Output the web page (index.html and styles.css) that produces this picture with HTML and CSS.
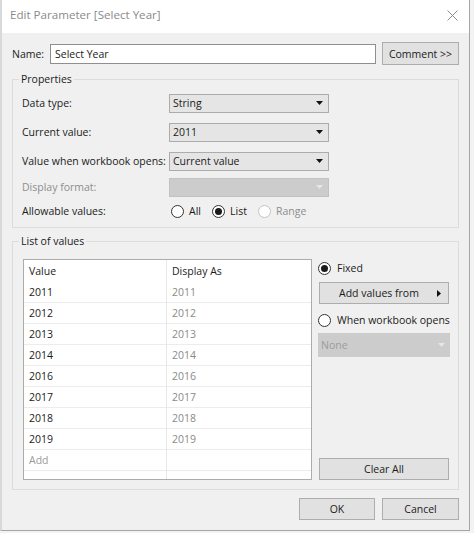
FILE: index.html
```html
<!DOCTYPE html>
<html>
<head>
<meta charset="utf-8">
<title>Edit Parameter</title>
<link rel="stylesheet" href="styles.css">
</head>
<body>
<div class="window">
  <div class="titlebar">
    <span class="title">Edit Parameter [Select Year]</span>
    <svg class="close" width="11" height="11" viewBox="0 0 11 11"><path d="M0.5 0.5L10.5 10.5M10.5 0.5L0.5 10.5" stroke="#8c8c8c" stroke-width="1" fill="none"/></svg>
  </div>
  <div class="content">
    <div class="name-row">
      <span class="name-label">Name:</span>
      <div class="input">Select Year</div>
      <div class="btn comment">Comment &gt;&gt;</div>
    </div>

    <div class="group props">
      <div class="group-title">Properties</div>
      <div class="prow r1">
        <span class="plabel">Data type:</span>
        <div class="combo"><span class="combo-text">String</span><svg class="arrow" width="7" height="4" viewBox="0 0 7 4"><path d="M0 0H7L3.5 4Z" fill="#111"/></svg></div>
      </div>
      <div class="prow r2">
        <span class="plabel">Current value:</span>
        <div class="combo"><span class="combo-text">2011</span><svg class="arrow" width="7" height="4" viewBox="0 0 7 4"><path d="M0 0H7L3.5 4Z" fill="#111"/></svg></div>
      </div>
      <div class="prow r3">
        <span class="plabel">Value when workbook opens:</span>
        <div class="combo"><span class="combo-text">Current value</span><svg class="arrow" width="7" height="4" viewBox="0 0 7 4"><path d="M0 0H7L3.5 4Z" fill="#111"/></svg></div>
      </div>
      <div class="prow r4">
        <span class="plabel disabled">Display format:</span>
        <div class="combo off"><span class="combo-text"></span><svg class="arrow" width="7" height="4" viewBox="0 0 7 4"><path d="M0 0H7L3.5 4Z" fill="#e6e6e6"/></svg></div>
      </div>
      <div class="prow r5">
        <span class="plabel">Allowable values:</span>
        <div class="opts">
          <div class="opt o-all"><span class="radio"></span><span>All</span></div>
          <div class="opt o-list"><span class="radio on"></span><span>List</span></div>
          <div class="opt o-range disabled"><span class="radio off"></span><span>Range</span></div>
        </div>
      </div>
    </div>

    <div class="group values">
      <div class="group-title">List of values</div>
      <div class="values-body">
        <div class="table">
          <div class="trow head"><div class="c1">Value</div><div class="c2">Display As</div></div>
          <div class="trow"><div class="c1">2011</div><div class="c2">2011</div></div>
          <div class="trow"><div class="c1">2012</div><div class="c2">2012</div></div>
          <div class="trow"><div class="c1">2013</div><div class="c2">2013</div></div>
          <div class="trow"><div class="c1">2014</div><div class="c2">2014</div></div>
          <div class="trow"><div class="c1">2016</div><div class="c2">2016</div></div>
          <div class="trow"><div class="c1">2017</div><div class="c2">2017</div></div>
          <div class="trow"><div class="c1">2018</div><div class="c2">2018</div></div>
          <div class="trow"><div class="c1">2019</div><div class="c2">2019</div></div>
          <div class="trow add"><div class="c1">Add</div><div class="c2"></div></div>
          <div class="trow filler"><div class="c1"></div><div class="c2"></div></div>
        </div>
        <div class="side">
          <div class="sopt fixed"><span class="radio on"></span><span>Fixed</span></div>
          <div class="btn addvals"><span class="addvals-text">Add values from</span><svg class="rarrow" width="4" height="7" viewBox="0 0 4 7"><path d="M0 0L4 3.5L0 7Z" fill="#111"/></svg></div>
          <div class="sopt when"><span class="radio"></span><span>When workbook opens</span></div>
          <div class="combo none"><span class="combo-text">None</span><svg class="arrow" width="7" height="4" viewBox="0 0 7 4"><path d="M0 0H7L3.5 4Z" fill="#e6e6e6"/></svg></div>
          <div class="btn clearall">Clear All</div>
        </div>
      </div>
    </div>

    <div class="footer">
      <div class="btn ok">OK</div>
      <div class="btn cancel">Cancel</div>
    </div>
  </div>
</div>
</body>
</html>
```

FILE: styles.css
```css
* { box-sizing: border-box; }

html, body {
  margin: 0;
  padding: 0;
}

body {
  background: #f3f3f3;
  font-family: "Open Sans", "Noto Sans", sans-serif;
  font-size: 10.5px;
  color: #1b1b1b;
  white-space: nowrap;
}

.window {
  width: 470px;
  height: 531px;
  background: #f0f0f0;
  border-left: 2px solid #d9d9d9;
  border-right: 1px solid #a5a5a5;
  border-bottom: 1px solid #a5a5a5;
  overflow: hidden;
}

.titlebar {
  height: 33px;
  background: #ffffff;
  display: flex;
  justify-content: space-between;
  align-items: flex-start;
  padding: 6px 11px 0 8px;
}

.title {
  font-size: 11.6px;
  line-height: 18px;
  color: #8a8a8a;
}

.close {
  margin-top: 4px;
  display: block;
}

.content {
  padding: 9px 10px 0 10px;
}

.name-row {
  display: flex;
  align-items: center;
  height: 23px;
}

.name-label {
  width: 38px;
}

.input {
  width: 326px;
  height: 20px;
  background: #ffffff;
  border: 1px solid #8f8f8f;
  padding-left: 4px;
  line-height: 18px;
  margin-right: 6px;
}

.btn {
  background: #e1e1e1;
  border: 1px solid #adadad;
  display: flex;
  align-items: center;
  justify-content: center;
  height: 22px;
}

.comment {
  width: 77px;
  height: 23px;
}

.group {
  border: 1px solid #dcdcdc;
}

.group-title {
  display: table;
  line-height: 16px;
  margin-top: -9px;
  margin-left: -3px;
  padding: 0 2px;
  background: #f0f0f0;
}

.props {
  margin-top: 14px;
  padding: 0 10px 4px 9px;
}

.props .group-title {
  margin-bottom: 2px;
}

.prow {
  display: flex;
  align-items: center;
}

.r1 { height: 28px; }
.r2 { height: 30px; }
.r3 { height: 28px; }
.r4 { height: 24px; }
.r5 { height: 24px; }

.plabel {
  width: 147px;
  flex: none;
}

.disabled {
  color: #8e8e8e;
}

.combo {
  width: 160px;
  height: 19px;
  background: #e5e5e5;
  border: 1px solid #acacac;
  display: flex;
  align-items: center;
  justify-content: space-between;
  padding: 0 5px 0 3px;
}

.combo.off {
  background: #cccccc;
  border-color: #c2c2c2;
}

.arrow { display: block; }

.opts {
  display: flex;
  align-items: center;
}

.opt {
  display: flex;
  align-items: center;
  gap: 5px;
}

.o-all { margin-left: 2px; width: 41px; }
.o-list { width: 46px; }

.radio {
  width: 13px;
  height: 13px;
  border-radius: 50%;
  border: 1px solid #333333;
  background: #ffffff;
  display: flex;
  align-items: center;
  justify-content: center;
  flex: none;
}

.radio.on::after {
  content: "";
  width: 7px;
  height: 7px;
  border-radius: 50%;
  background: #1a1a1a;
}

.radio.off {
  border-color: #c4c4c4;
}

.values {
  margin-top: 13px;
  padding: 0 8px 9px 10px;
}

.values .group-title {
  margin-left: -4px;
  margin-bottom: 10px;
}

.values-body {
  display: flex;
  height: 221px;
}

.table {
  width: 289px;
  height: 221px;
  background: #ffffff;
  border: 1px solid #acacac;
  display: flex;
  flex-direction: column;
}

.trow {
  display: grid;
  grid-template-columns: 143px 1fr;
  height: 21px;
  border-bottom: 1px solid #ececec;
  flex: none;
}

.trow.head {
  height: 22px;
  border-bottom: none;
}

.trow.filler {
  flex: 1;
  border-bottom: none;
}

.c1, .c2 {
  padding-left: 5px;
  display: flex;
  align-items: center;
}

.c1 {
  border-right: 1px solid #e8e8e8;
}

.trow .c2 { color: #8a8a8a; }
.trow.head .c2 { color: #1b1b1b; }
.trow.add .c1 { color: #9a9a9a; }

.side {
  width: 132px;
  margin-left: 6px;
  display: flex;
  flex-direction: column;
}

.sopt {
  display: flex;
  align-items: center;
  gap: 6px;
  height: 18px;
}

.addvals {
  margin-top: 5px;
  margin-left: 1px;
  width: 130px;
  justify-content: space-between;
  padding: 0 7px 0 19px;
}

.when {
  margin-top: 7px;
}

.combo.none {
  margin-top: 4px;
  width: 132px;
  height: 24px;
  background: #cccccc;
  border: none;
  color: #9c9c9c;
}

.clearall {
  margin-top: auto;
  margin-left: 1px;
  width: 130px;
}

.footer {
  display: flex;
  justify-content: flex-end;
  gap: 7px;
  margin-top: 8px;
}

.ok { width: 76px; }
.cancel { width: 77px; }
```
